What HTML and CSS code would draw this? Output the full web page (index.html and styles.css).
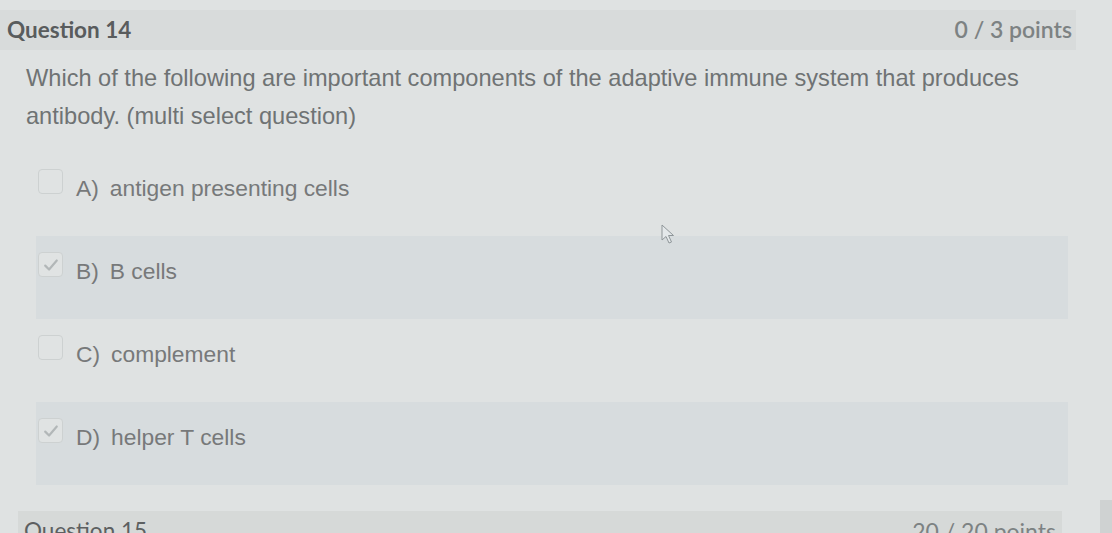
FILE: index.html
```
<!DOCTYPE html>
<html lang="en">
  <head>
    <meta charset="UTF-8" />
    <title>Quiz results</title>
    <link rel="stylesheet" href="styles.css">
  </head>
  <body>
    <div class="quiz">
      <div class="question">
        <div class="q-header">
          <span class="q-name">Question 14</span>
          <span class="q-points">0 / 3 points</span>
        </div>
        <div class="q-text">
          Which of the following are important components of the adaptive immune system that produces antibody. (multi select question)
        </div>
        <div class="answers">
          <div class="answer">
            <span class="box"></span>
            <span class="letter">A)</span>
            <span class="label">antigen presenting cells</span>
          </div>
          <div class="answer selected">
            <span class="box">
              <svg width="18" height="18" viewBox="0 0 14 14"><path d="M2.5 7.5 L5.5 10.5 L11.5 3.5" fill="none" stroke="#b2b7b8" stroke-width="1.7" stroke-linecap="round" stroke-linejoin="round"/></svg>
            </span>
            <span class="letter">B)</span>
            <span class="label">B cells</span>
          </div>
          <div class="answer">
            <span class="box"></span>
            <span class="letter">C)</span>
            <span class="label">complement</span>
          </div>
          <div class="answer selected">
            <span class="box">
              <svg width="18" height="18" viewBox="0 0 14 14"><path d="M2.5 7.5 L5.5 10.5 L11.5 3.5" fill="none" stroke="#b2b7b8" stroke-width="1.7" stroke-linecap="round" stroke-linejoin="round"/></svg>
            </span>
            <span class="letter">D)</span>
            <span class="label">helper T cells</span>
          </div>
        </div>
      </div>

      <div class="question next">
        <div class="q-header">
          <span class="q-name">Question 15</span>
          <span class="q-points">20 / 20 points</span>
        </div>
      </div>
    </div>

    <div class="scrollbar"></div>

    <!-- mouse pointer -->
    <svg class="pointer" width="18" height="22" viewBox="0 0 18 22">
      <path d="M1 1 L1 16 L5 12.5 L8 19 L10.5 18 L7.5 11.5 L12.5 11.5 Z" fill="#e4e8ea" stroke="#8f9699" stroke-width="1" stroke-linejoin="round"/>
    </svg>
  </body>
</html>
```

FILE: styles.css
```
body {
  margin: 0;
  background: #dfe2e2;
  overflow: hidden;
  height: 533px;
}

.quiz {
  width: 1076px;
  padding-top: 10px;
}

.q-header {
  display: flex;
  justify-content: space-between;
  align-items: center;
  height: 40px;
  padding: 0 4px 2px 7px;
  box-sizing: border-box;
  background: #d8dbdb;
  font-family: Lato, "Open Sans", sans-serif;
  font-weight: 700;
  font-size: 22.5px;
  color: #595c5d;
}

.q-points {
  color: #7d8283;
  font-size: 23px;
  font-weight: 600;
}

.q-text {
  padding: 9px 20px 0 26px;
  font-family: "Liberation Sans", Arial, sans-serif;
  font-size: 23.6px;
  line-height: 38px;
  color: #6f7374;
}

.answers {
  margin: 18px 8px 0 36px;
}

.answer {
  display: flex;
  align-items: flex-start;
  height: 83px;
  box-sizing: border-box;
  padding-top: 16px;
  font-family: "Liberation Sans", Arial, sans-serif;
  font-size: 22.8px;
  line-height: 24px;
  color: #77797a;
}

.answer.selected {
  background: #d7dcde;
}

.answer .letter,
.answer .label {
  margin-top: 7px;
}

.box {
  display: flex;
  align-items: center;
  justify-content: center;
  box-sizing: border-box;
  width: 25px;
  height: 25px;
  margin: 0 13px 0 2px;
  border: 1px solid #cdd1d1;
  border-radius: 4px;
  background: #e0e3e3;
}

.letter {
  margin-right: 11px;
}

.next {
  margin: 26px 0 0 18px;
}

.next .q-header {
  background: #d6d9d8;
  font-weight: 400;
  color: #5d6061;
  align-items: flex-start;
  padding: 6px 6px 0 6px;
  width: 1044px;
}

.next .q-points {
  font-weight: 400;
}

.scrollbar {
  position: absolute;
  left: 1100px;
  top: 500px;
  width: 12px;
  height: 40px;
  background: #cfd2d2;
}

.pointer {
  position: absolute;
  left: 661px;
  top: 224px;
}
```
